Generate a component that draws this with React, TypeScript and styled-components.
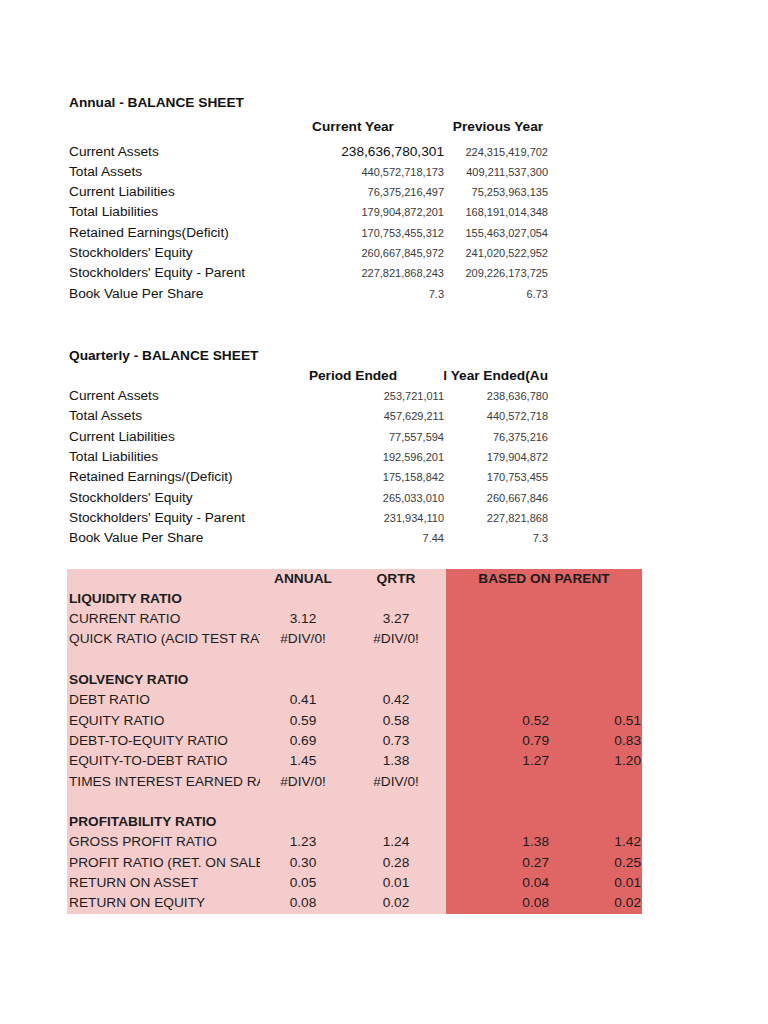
import React from 'react'
import styled, { createGlobalStyle } from 'styled-components'

const GlobalStyle = createGlobalStyle`
  html, body {
    margin: 0;
    padding: 0;
    background: #fff;
  }
  body {
    font-family: "Liberation Sans", Arial, sans-serif;
    color: #111;
  }
`

const COLS = '193px 86px 100px 104px 92px'
const ROW_H = '20.3px'

const Page = styled.div`
  width: 768px;
  min-height: 1024px;
  box-sizing: border-box;
  padding: 93px 0 0 67px;
`

const Sheet = styled.section<{ $gap?: number }>`
  display: flex;
  flex-direction: column;
  margin-bottom: ${({ $gap }) => $gap ?? 0}px;
`

const Row = styled.div<{ $space?: number }>`
  display: grid;
  grid-template-columns: ${COLS};
  height: ${ROW_H};
  align-items: center;
  margin-top: ${({ $space }) => $space ?? 0}px;
`

const Title = styled.div`
  grid-column: 1 / 4;
  font-size: 13.7px;
  font-weight: 700;
  padding-left: 2px;
  line-height: ${ROW_H};
  white-space: nowrap;
`

const Label = styled.div`
  grid-column: 1 / 2;
  font-size: 13.7px;
  padding-left: 2px;
  line-height: ${ROW_H};
  white-space: nowrap;
  color: #111;
`

const HeadCell = styled.div<{ $col: string; $align?: 'center' | 'right' }>`
  grid-column: ${({ $col }) => $col};
  display: flex;
  justify-content: ${({ $align }) => ($align === 'right' ? 'flex-end' : 'center')};
  font-size: 13.7px;
  font-weight: 700;
  padding-right: ${({ $align }) => ($align === 'right' ? '2px' : '0')};
  line-height: ${ROW_H};
  white-space: nowrap;
`

const Num = styled.div<{ $col: number; $big?: boolean }>`
  grid-column: ${({ $col }) => `${$col} / ${$col + 1}`};
  display: flex;
  justify-content: flex-end;
  font-size: ${({ $big }) => ($big ? '13.7px' : '11px')};
  color: ${({ $big }) => ($big ? '#111' : '#3a3a3a')};
  padding-right: 2px;
  line-height: ${ROW_H};
  white-space: nowrap;
`

// ratio table
const RatioTable = styled.div`
  display: flex;
  flex-direction: column;
`

const RatioRow = styled.div`
  display: grid;
  grid-template-columns: ${COLS};
  height: ${ROW_H};
`

const Cell = styled.div<{ $fill: 'pink' | 'red'; $align?: string; $bold?: boolean; $span?: number }>`
  grid-column: span ${({ $span }) => $span ?? 1};
  background: ${({ $fill }) => ($fill === 'pink' ? '#f4cccc' : '#e06666')};
  font-size: 13.7px;
  font-weight: ${({ $bold }) => ($bold ? 700 : 400)};
  text-align: ${({ $align }) => $align ?? 'left'};
  padding: ${({ $align }) => ($align === 'right' ? '0 1px 0 0' : $align === 'center' ? '0' : '0 0 0 2px')};
  line-height: ${ROW_H};
  white-space: nowrap;
  overflow: hidden;
  color: #1c1c1c;
`

type SheetRow = [string, string, string, boolean?]

const annualRows: SheetRow[] = [
  ['Current Assets', '238,636,780,301', '224,315,419,702', true],
  ['Total Assets', '440,572,718,173', '409,211,537,300'],
  ['Current Liabilities', '76,375,216,497', '75,253,963,135'],
  ['Total Liabilities', '179,904,872,201', '168,191,014,348'],
  ['Retained Earnings(Deficit)', '170,753,455,312', '155,463,027,054'],
  ["Stockholders' Equity", '260,667,845,972', '241,020,522,952'],
  ["Stockholders' Equity - Parent", '227,821,868,243', '209,226,173,725'],
  ['Book Value Per Share', '7.3', '6.73'],
]

const quarterRows: SheetRow[] = [
  ['Current Assets', '253,721,011', '238,636,780'],
  ['Total Assets', '457,629,211', '440,572,718'],
  ['Current Liabilities', '77,557,594', '76,375,216'],
  ['Total Liabilities', '192,596,201', '179,904,872'],
  ['Retained Earnings/(Deficit)', '175,158,842', '170,753,455'],
  ["Stockholders' Equity", '265,033,010', '260,667,846'],
  ["Stockholders' Equity - Parent", '231,934,110', '227,821,868'],
  ['Book Value Per Share', '7.44', '7.3'],
]

type Ratio = { label: string; bold?: boolean; a?: string; q?: string; p1?: string; p2?: string }

const ratios: Ratio[] = [
  { label: 'LIQUIDITY RATIO', bold: true },
  { label: 'CURRENT RATIO', a: '3.12', q: '3.27' },
  { label: 'QUICK RATIO (ACID TEST RATIO)', a: '#DIV/0!', q: '#DIV/0!' },
  { label: '' },
  { label: 'SOLVENCY RATIO', bold: true },
  { label: 'DEBT RATIO', a: '0.41', q: '0.42' },
  { label: 'EQUITY RATIO', a: '0.59', q: '0.58', p1: '0.52', p2: '0.51' },
  { label: 'DEBT-TO-EQUITY RATIO', a: '0.69', q: '0.73', p1: '0.79', p2: '0.83' },
  { label: 'EQUITY-TO-DEBT RATIO', a: '1.45', q: '1.38', p1: '1.27', p2: '1.20' },
  { label: 'TIMES INTEREST EARNED RATIO', a: '#DIV/0!', q: '#DIV/0!' },
  { label: '' },
  { label: 'PROFITABILITY RATIO', bold: true },
  { label: 'GROSS PROFIT RATIO', a: '1.23', q: '1.24', p1: '1.38', p2: '1.42' },
  { label: 'PROFIT RATIO (RET. ON SALES)', a: '0.30', q: '0.28', p1: '0.27', p2: '0.25' },
  { label: 'RETURN ON ASSET', a: '0.05', q: '0.01', p1: '0.04', p2: '0.01' },
  { label: 'RETURN ON EQUITY', a: '0.08', q: '0.02', p1: '0.08', p2: '0.02' },
]

const BalanceRows = ({ rows, first }: { rows: SheetRow[]; first?: number }) => (
  <>
    {rows.map(([label, cur, prev, big], i) => (
      <Row key={i} $space={i === 0 ? first : 0}>
        <Label>{label}</Label>
        <Num $col={3} $big={big}>{cur}</Num>
        <Num $col={4}>{prev}</Num>
      </Row>
    ))}
  </>
)

const App = () => {
  return (
    <>
      <GlobalStyle />
      <Page>
        <Sheet $gap={41.6}>
          <Row>
            <Title>Annual - BALANCE SHEET</Title>
          </Row>
          <Row $space={4}>
            <HeadCell $col="2 / 4">Current Year</HeadCell>
            <HeadCell $col="4 / 5">Previous Year</HeadCell>
          </Row>
          <BalanceRows rows={annualRows} first={4} />
        </Sheet>

        <Sheet $gap={20}>
          <Row>
            <Title>Quarterly - BALANCE SHEET</Title>
          </Row>
          <Row>
            <HeadCell $col="2 / 4">Period Ended</HeadCell>
            <HeadCell $col="4 / 5" $align="right">l Year Ended(Au</HeadCell>
          </Row>
          <BalanceRows rows={quarterRows} />
        </Sheet>

        <RatioTable>
          <RatioRow>
            <Cell $fill="pink" />
            <Cell $fill="pink" $align="center" $bold>ANNUAL</Cell>
            <Cell $fill="pink" $align="center" $bold>QRTR</Cell>
            <Cell $fill="red" $align="center" $bold $span={2}>BASED ON PARENT</Cell>
          </RatioRow>
          {ratios.map((r, i) => (
            <RatioRow key={i}>
              <Cell $fill="pink" $bold={r.bold}>{r.label}</Cell>
              <Cell $fill="pink" $align="center">{r.a}</Cell>
              <Cell $fill="pink" $align="center">{r.q}</Cell>
              <Cell $fill="red" $align="right">{r.p1}</Cell>
              <Cell $fill="red" $align="right">{r.p2}</Cell>
            </RatioRow>
          ))}
        </RatioTable>
      </Page>
    </>
  )
}

export default App
